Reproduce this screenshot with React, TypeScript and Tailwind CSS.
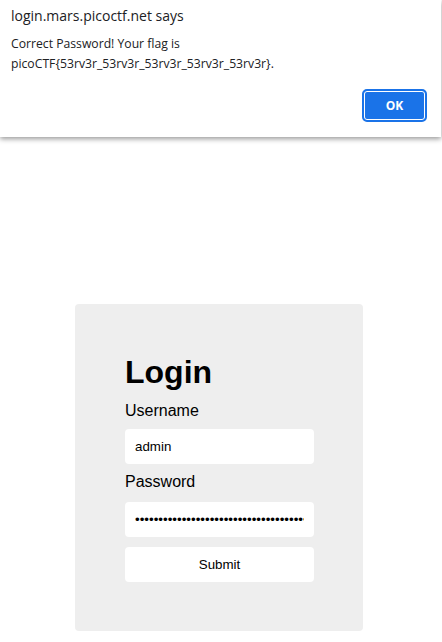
import React from "react";

export default function App() {
  return (
    <div className="relative w-[442px] h-[642px] bg-white overflow-hidden" style={{ fontFamily: '"Liberation Sans", Arial, sans-serif' }}>
      {/* page */}
      <div className="pt-[304px] pl-[75px]">
        <div className="w-[288px] bg-[#eeeeee] rounded-[4px] pt-[50px] pb-[49px] px-[50px] text-black">
          <h1 className="h-[37px] text-[32px] leading-[37px] font-bold">Login</h1>
          <div className="mt-[11px] h-[18px] text-[16px] leading-[18px]">Username</div>
          <input
            readOnly
            value="admin"
            className="mt-[9px] block w-[189px] h-[35px] bg-white rounded-[4px] pl-[10px] text-[13.33px] text-black outline-none"
          />
          <div className="mt-[9px] h-[18px] text-[16px] leading-[18px]">Password</div>
          <input
            readOnly
            type="password"
            value="aaaaaaaaaaaaaaaaaaaaaaaaaaaaaaaaaaaaaaaaaaaaaaaaaaaaaaaaaaaaaaaaaaaaaaaaaaaaaaaaaaaaaa"
            className="mt-[11px] block w-[189px] h-[35px] bg-white rounded-[4px] pl-[10px] pr-[10px] text-[13.33px] text-black outline-none"
          />
          <button className="mt-[10px] block w-[189px] h-[35px] bg-white rounded-[4px] text-[13.33px] text-black">
            Submit
          </button>
        </div>
      </div>

      {/* alert dialog overlay */}
      <div
        className="absolute top-0 left-0 w-[441px] h-[137px] bg-white shadow-[0_2px_5px_rgba(0,0,0,0.4)] text-[#202124]"
        style={{ fontFamily: '"Open Sans", "Noto Sans", sans-serif' }}
      >
        <div className="pl-[11px] pt-[6px]">
          <div className="text-[14px] leading-[20px]">login.mars.picoctf.net says</div>
          <div className="mt-[8px] text-[12.2px] leading-[20px]">
            <div>Correct Password! Your flag is</div>
            <div>picoCTF{"{"}53rv3r_53rv3r_53rv3r_53rv3r_53rv3r{"}"}.</div>
          </div>
        </div>
        <div className="flex justify-end pr-[14px] mt-[15px]">
          <button className="w-[65px] h-[33px] rounded-[5px] bg-[#1a73e8] border-2 border-[#1a73e8] shadow-[inset_0_0_0_1px_#ffffff] text-white text-[12px] font-bold flex items-center justify-center">
            OK
          </button>
        </div>
      </div>
    </div>
  );
}
